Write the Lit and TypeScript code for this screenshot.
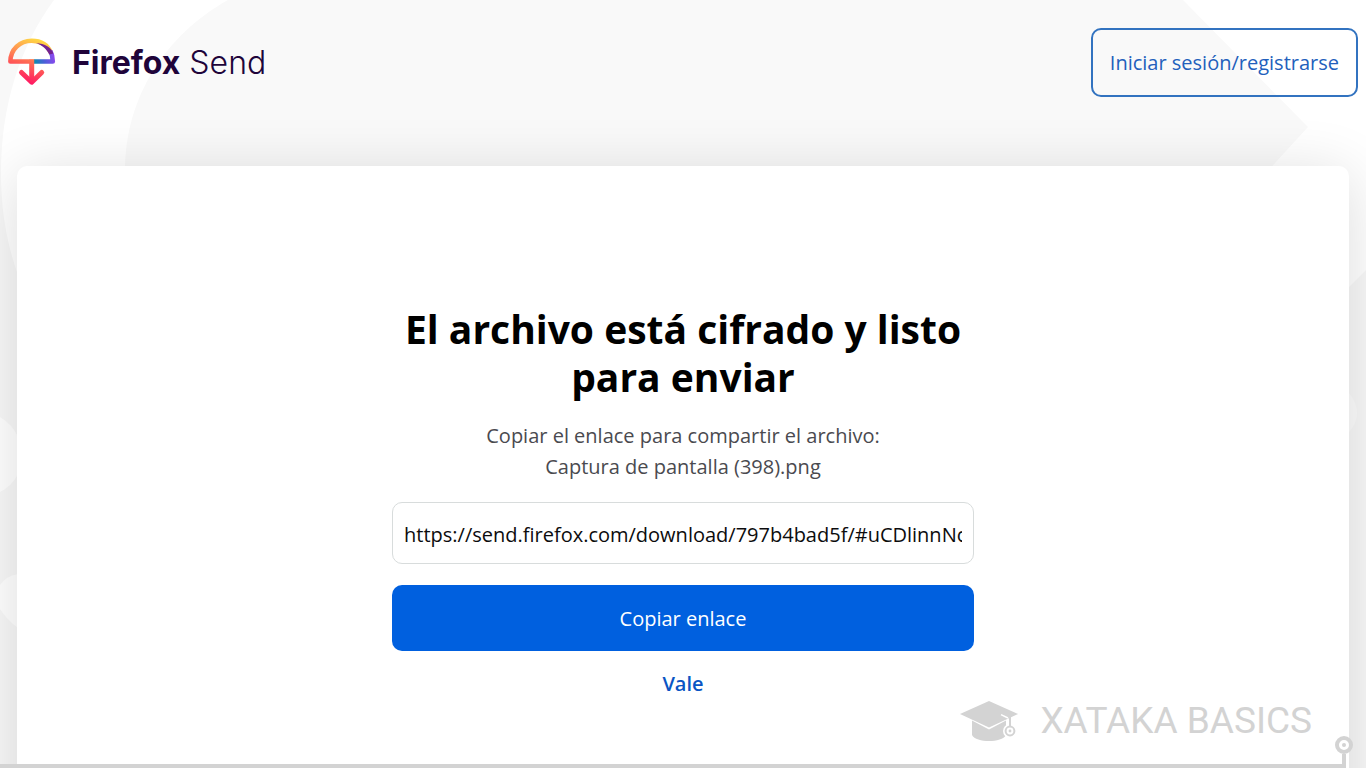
import { LitElement, html, css, svg } from "lit";
import { customElement, property } from "lit/decorators.js";

const backdrop = svg`
  <rect width="1366" height="768" fill="#f8f8f8" />
  <path fill="#fff" d="M54 0C20 46 1 106 1 172C1 212 7 244 18 275L400 600L1349 287L1366 270V0Z" />
  <path fill="#f9f9f9" d="M228 0C165 35 125 98 125 170V300H1150L1308 127L1183 0Z" />
  <path fill="#fff" d="M0 417Q12 424 18 437V474Q12 486 0 492Z" />
  <path fill="#fff" d="M18 574Q6 576 0 585V609Q7 620 18 628Z" />
  <path fill="#fcfcfc" d="M1349 393Q1357 403 1357 413T1349 432Z" />
`;

@customElement("send-logo")
export class SendLogo extends LitElement {
  static styles = css`
    .logo {
      display: flex;
      align-items: center;
      gap: 16px;
      color: #20043a;
      text-decoration: none;
      font: 300 32px/48px Inter, sans-serif;
    }
    .mark {
      width: 48px;
      height: 48px;
    }
    .name {
      padding-top: 2px;
    }
    .brand {
      font-weight: 700;
    }
  `;

  render() {
    return html`
      <a class="logo" href="#">
        <svg class="mark" viewBox="0 0 48 48" aria-hidden="true">
          <defs>
            <linearGradient id="warm" x1="32" y1="0" x2="18" y2="46" gradientUnits="userSpaceOnUse">
              <stop offset="0" stop-color="#ffe040" />
              <stop offset=".28" stop-color="#ffa650" />
              <stop offset=".6" stop-color="#ff6055" />
              <stop offset="1" stop-color="#ff1464" />
            </linearGradient>
            <linearGradient id="cool" x1="27" y1="24" x2="46" y2="18" gradientUnits="userSpaceOnUse">
              <stop offset="0" stop-color="#108ab0" />
              <stop offset=".45" stop-color="#4a5fd8" />
              <stop offset="1" stop-color="#8c49ee" />
            </linearGradient>
          </defs>
          <path fill="none" stroke="url(#warm)" stroke-width="4.6" stroke-linejoin="round" d="M26 23.5H2.4C2.4 11.5 11.8 2.7 23.7 2.7C33 2.7 40 7.4 43 15" />
          <path fill="none" stroke="url(#cool)" stroke-width="4.6" stroke-linejoin="round" d="M26 23.5H44.8C44.8 19.5 44 16 42.4 13" />
          <path fill="#722291" d="M28 5C37 5.6 43.4 9.8 45.4 15.5L41.4 16.5C38.4 11 34.4 7.4 28 5Z" />
          <path fill="none" stroke="url(#warm)" stroke-width="5" d="M23.7 21.5V42" />
          <path fill="none" stroke="url(#warm)" stroke-width="5" stroke-linecap="round" stroke-linejoin="round" d="M13.5 34.5L23.7 44.2L33.7 34.5" />
        </svg>
        <span class="name"><span class="brand">Firefox</span> Send</span>
      </a>
    `;
  }
}

@customElement("course-watermark")
export class CourseWatermark extends LitElement {
  static styles = css`
    :host {
      color: #d3d3d3;
    }
    .title {
      display: flex;
      justify-content: flex-end;
      align-items: center;
      gap: 22px;
      margin-bottom: -6px;
      padding-right: 54px;
      font: 400 37px/42px Roboto, sans-serif;
    }
    .cap {
      width: 58px;
      height: 42px;
    }
    .rail {
      display: flex;
      align-items: flex-end;
    }
    .line {
      flex: 1;
      height: 4px;
      background: #d3d3d3;
    }
    .knob {
      display: block;
      width: 32px;
      height: 32px;
    }
  `;

  render() {
    return html`
      <div class="title">
        <svg class="cap" viewBox="0 0 58 42" aria-hidden="true">
          <path fill="currentColor" d="M12 20.5L29 29.5L46 20.5V35C42 43 16 43 12 35Z" />
          <path fill="currentColor" d="M0 14L29 1L58 14L29 27.5Z" />
          <path fill="none" stroke="#fff" stroke-width="5" d="M49.5 19V26" />
          <circle cx="50" cy="31" r="7" fill="#fff" />
          <path fill="none" stroke="#fff" stroke-width="1.4" d="M41 14.6L48 18" />
          <path fill="none" stroke="currentColor" stroke-width="2" d="M50 16V27" />
          <circle cx="50" cy="31" r="4.4" fill="none" stroke="currentColor" stroke-width="2" />
          <circle cx="50" cy="31" r="1.4" fill="currentColor" />
        </svg>
        <span>XATAKA BASICS</span>
      </div>
      <div class="rail">
        <span class="line"></span>
        <svg class="knob" viewBox="0 0 32 32" aria-hidden="true">
          <path fill="currentColor" d="M0 28H8V18H12V32H0Z" />
          <circle cx="10" cy="9" r="7" fill="#fff" stroke="currentColor" stroke-width="4" />
          <circle cx="10" cy="9" r="2" fill="currentColor" />
        </svg>
      </div>
    `;
  }
}

@customElement("app-root")
export class AppRoot extends LitElement {
  @property() fileName = "Captura de pantalla (398).png";
  @property() link = "https://send.firefox.com/download/797b4bad5f/#uCDlinnNc4";

  static styles = css`
    :host {
      position: relative;
      isolation: isolate;
      display: flex;
      flex-direction: column;
      box-sizing: border-box;
      height: 100vh;
      overflow: hidden;
      font: 400 20px/31px "Open Sans", sans-serif;
      color: #000;
    }
    .backdrop {
      position: absolute;
      inset: 0;
      z-index: -1;
      width: 100%;
      height: 100%;
    }
    .header {
      display: flex;
      justify-content: space-between;
      align-items: flex-start;
      padding: 28px 8px 69px;
    }
    .brand {
      padding-top: 9px;
    }
    .signin {
      padding: 17px;
      border: 2px solid #3273c0;
      border-radius: 10px;
      color: #2260bc;
      line-height: 31px;
      text-decoration: none;
    }
    .card {
      flex: 1;
      display: flex;
      justify-content: center;
      align-items: flex-start;
      margin: 0 17px -80px;
      padding: 139px 24px 0;
      border-radius: 10px;
      background: #fff;
      box-shadow: 0 8px 60px rgba(0, 0, 0, 0.14);
    }
    .share {
      display: flex;
      flex-direction: column;
      width: 100%;
      max-width: 582px;
      text-align: center;
    }
    .heading {
      margin: 0 0 19px;
      font-size: 39px;
      line-height: 48px;
      font-weight: 700;
    }
    .hint {
      display: block;
      margin-bottom: 20px;
      color: #4a4a4f;
    }
    .file {
      display: block;
    }
    .link {
      box-sizing: border-box;
      width: 100%;
      height: 62px;
      margin-bottom: 21px;
      padding: 3px 11px 0;
      border: 1px solid #d8dcdc;
      border-radius: 10px;
      background: #fff;
      color: #0c0c0d;
      font: inherit;
      outline: none;
    }
    .copy {
      height: 66px;
      border: 0;
      border-radius: 10px;
      background: #0060df;
      color: #fff;
      font: inherit;
    }
    .done {
      align-self: center;
      margin-top: 17px;
      padding: 0;
      border: 0;
      background: none;
      color: #0a55c4;
      font: inherit;
      font-weight: 600;
    }
    .watermark {
      position: absolute;
      right: 0;
      bottom: 0;
      left: 0;
      pointer-events: none;
    }
  `;

  render() {
    return html`
      <svg class="backdrop" viewBox="0 0 1366 768" preserveAspectRatio="none" aria-hidden="true">${backdrop}</svg>
      <header class="header">
        <send-logo class="brand"></send-logo>
        <a class="signin" href="#">Iniciar sesión/registrarse</a>
      </header>
      <main class="card">
        <section class="share">
          <h1 class="heading">El archivo está cifrado y listo para enviar</h1>
          <label class="hint" for="link">
            Copiar el enlace para compartir el archivo:
            <span class="file">${this.fileName}</span>
          </label>
          <input class="link" id="link" type="text" readonly .value=${this.link} />
          <button class="copy" type="button">Copiar enlace</button>
          <button class="done" type="button">Vale</button>
        </section>
      </main>
      <course-watermark class="watermark"></course-watermark>
    `;
  }
}
